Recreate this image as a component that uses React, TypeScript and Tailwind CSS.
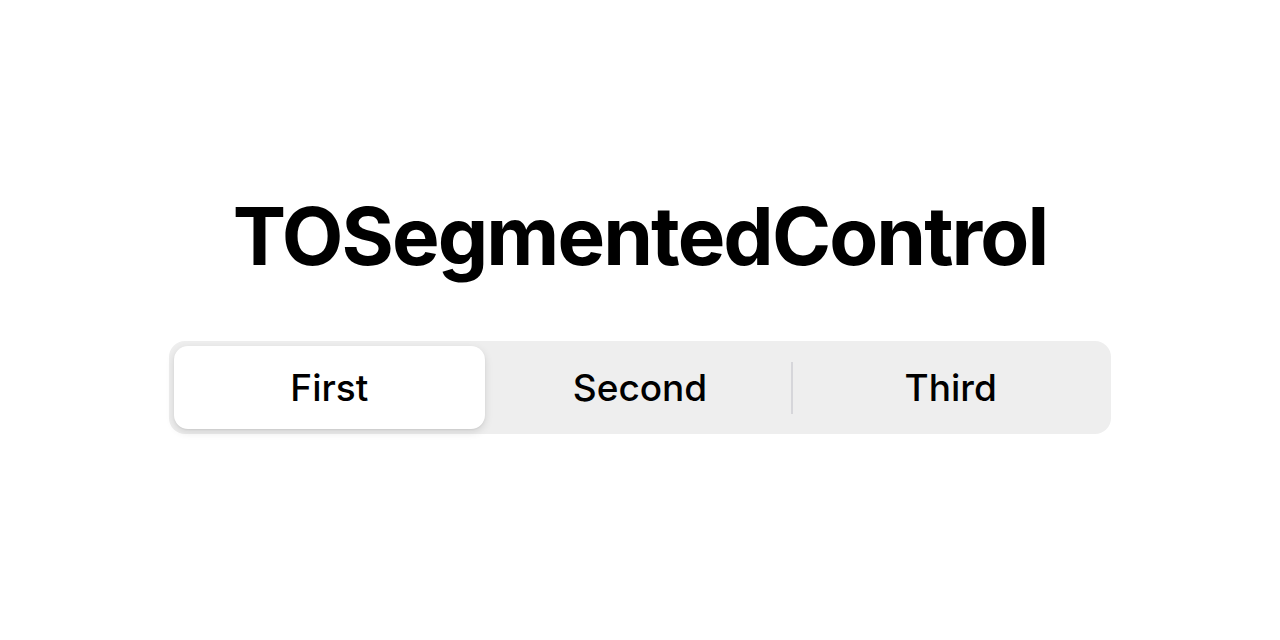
import { useState } from "react";

const segments = ["First", "Second", "Third"];

export default function App() {
  const [selected, setSelected] = useState(0);

  return (
    <div className="flex h-[640px] w-full flex-col items-center bg-white pt-[192px] font-['Inter',sans-serif] text-black">
      <h1 className="text-[80px] font-bold leading-[88px] tracking-[-0.024em]">TOSegmentedControl</h1>

      <div className="mt-[61px] flex h-[93px] w-[942px] items-stretch rounded-[16px] bg-[#eeeeee] p-[5px]">
        {segments.map((label, i) => {
          const active = i === selected;
          const showDivider = i > 0 && i !== selected && i - 1 !== selected;
          return (
            <div key={label} className="relative flex flex-1 items-center">
              {showDivider && (
                <div className="absolute left-[-4px] top-[16px] h-[52px] w-[2px] bg-[#d6d6da]" />
              )}
              <button
                onClick={() => setSelected(i)}
                className={
                  active
                    ? "flex h-full flex-1 items-center justify-center rounded-[14px] bg-white text-[37px] font-medium shadow-[0_3px_8px_rgba(0,0,0,0.12),0_1px_2px_rgba(0,0,0,0.06)]"
                    : "flex h-full flex-1 items-center justify-center text-[37px] font-medium"
                }
              >
                {label}
              </button>
            </div>
          );
        })}
      </div>
    </div>
  );
}
